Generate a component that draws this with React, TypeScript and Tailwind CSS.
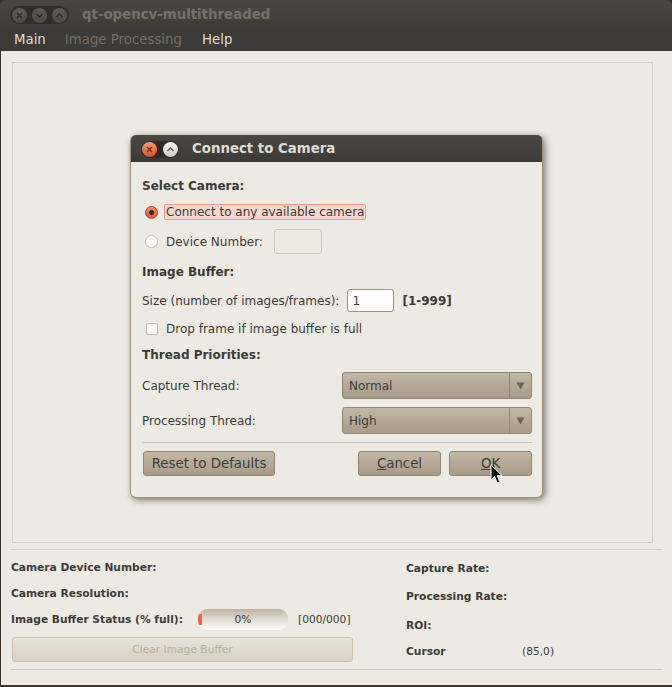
import React from "react";

const font = { fontFamily: '"DejaVu Sans", sans-serif' };

function WinBtn({ kind, active }: { kind: "x" | "down" | "up"; active?: boolean }) {
  const stroke = active ? (kind === "x" ? "#7a2a12" : "#555") : "#2c2a26";
  return (
    <span
      className={
        "flex h-[15px] w-[15px] items-center justify-center rounded-full " +
        (active
          ? kind === "x"
            ? "bg-gradient-to-b from-[#f59a78] to-[#d9502a]"
            : "bg-gradient-to-b from-[#fbfaf8] to-[#cfc9bf]"
          : "bg-gradient-to-b from-[#5f5b55] to-[#4f4b46]")
      }
    >
      <svg width="9" height="9" viewBox="0 0 9 9" fill="none" stroke={stroke} strokeWidth="1.4">
        {kind === "x" && <path d="M2 2l5 5M7 2l-5 5" />}
        {kind === "down" && <path d="M1.5 3l3 3 3-3" />}
        {kind === "up" && <path d="M1.5 6l3-3 3 3" />}
      </svg>
    </span>
  );
}

function Button({ children, className }: { children: React.ReactNode; className: string }) {
  return (
    <div
      className={
        "flex h-[25px] items-center justify-center rounded-[3px] border border-[#8f8571] bg-gradient-to-b from-[#c3b8a6] to-[#a89b87] text-[13.33px] text-[#3c3b37] " +
        className
      }
    >
      {children}
    </div>
  );
}

function Combo({ value }: { value: string }) {
  return (
    <div className="flex h-[27px] w-[190px] items-stretch rounded-[3px] border border-[#8f8571] bg-gradient-to-b from-[#c3b8a6] to-[#a89b87] text-[12px] text-[#3c3b37]">
      <div className="flex flex-1 items-center pl-[6px]">{value}</div>
      <div className="flex w-[22px] items-center justify-center border-l border-[#8f8571]">
        <svg width="9" height="8" viewBox="0 0 9 8">
          <path d="M0.5 0.5h8l-4 7z" fill="#67625a" />
        </svg>
      </div>
    </div>
  );
}

function Heading({ children, className = "" }: { children: React.ReactNode; className?: string }) {
  return <div className={"text-[12px] font-bold text-[#3c3b37] " + className}>{children}</div>;
}

function Dialog() {
  return (
    <div className="absolute left-[130px] top-[135px] flex h-[363px] w-[413px] flex-col rounded-[6px] border border-t-0 border-[#9a917f] bg-[#edeae3] shadow-[2px_2px_7px_rgba(60,55,45,0.65)]">
      <div className="flex h-[27px] shrink-0 items-center rounded-t-[5px] bg-gradient-to-b from-[#4a4843] to-[#3c3b37] pl-[10px] pt-[1px]">
        <div className="flex h-[17px] items-center gap-[6px] rounded-full bg-[#2c2b28] px-[1px]">
          <WinBtn kind="x" active />
          <WinBtn kind="up" active />
        </div>
        <div className="ml-[13px] text-[13.33px] font-bold text-[#dfdbd2]">Connect to Camera</div>
      </div>
      <div className="flex flex-1 flex-col pl-[11px] pr-[10px] pt-[15px]">
        <Heading>Select Camera:</Heading>
        <div className="mt-[9px] flex items-center">
          <span className="ml-[3px] flex h-[13px] w-[13px] items-center justify-center rounded-full border border-[#a8452c] bg-gradient-to-b from-[#f48a6a] to-[#e45a38]">
            <span className="h-[5px] w-[5px] rounded-full bg-[#2b2a27]" />
          </span>
          <span className="ml-[6px] flex h-[16px] items-center rounded-[2px] border border-[#ec9a84] bg-[#f5d8cd] px-[1px] text-[12px] text-[#3c3b37]">
            Connect to any available camera
          </span>
        </div>
        <div className="mt-[9px] flex items-center text-[12px] text-[#3c3b37]">
          <span className="ml-[3px] h-[13px] w-[13px] rounded-full border border-[#c4bcae] bg-white" />
          <span className="ml-[8px]">Device Number:</span>
          <span className="ml-[11px] h-[25px] w-[48px] rounded-[3px] border border-[#cfc6b5] bg-[#edeae3]" />
        </div>
        <Heading className="mt-[9px]">Image Buffer:</Heading>
        <div className="mt-[8px] flex items-center text-[12px] text-[#3c3b37]">
          <span>Size (number of images/frames):</span>
          <span className="ml-[8px] flex h-[23px] w-[47px] items-center rounded-[3px] border border-[#9c927f] bg-white pl-[4px]">1</span>
          <span className="ml-[8px] font-bold">[1-999]</span>
        </div>
        <div className="mt-[8px] flex items-center text-[12px] text-[#3c3b37]">
          <span className="ml-[4px] h-[12px] w-[12px] rounded-[2px] border border-[#c4bcae] bg-white" />
          <span className="ml-[8px]">Drop frame if image buffer is full</span>
        </div>
        <Heading className="mt-[8px]">Thread Priorities:</Heading>
        <div className="mt-[8px] flex items-center justify-between text-[12px] text-[#3c3b37]">
          <span>Capture Thread:</span>
          <Combo value="Normal" />
        </div>
        <div className="mt-[8px] flex items-center justify-between text-[12px] text-[#3c3b37]">
          <span>Processing Thread:</span>
          <Combo value="High" />
        </div>
        <div className="mt-[8px] h-[1px] shrink-0 bg-[#c9c4b9]" />
        <div className="mt-[8px] flex items-center">
          <Button className="ml-[1px] w-[132px]">Reset to Defaults</Button>
          <Button className="ml-auto w-[83px]">
            <span><span className="underline">C</span>ancel</span>
          </Button>
          <Button className="ml-[8px] w-[83px]">
            <span><span className="underline">O</span>K</span>
          </Button>
        </div>
      </div>
    </div>
  );
}

function Cursor() {
  return (
    <svg className="absolute left-[490px] top-[464px]" width="14" height="21" viewBox="0 0 14 21">
      <path d="M1 1v15l3.6-3.4 2.6 6.4 2.6-1.1-2.6-6.2h5z" fill="#111" stroke="#fff" strokeWidth="1" />
    </svg>
  );
}

export default function App() {
  return (
    <div className="relative h-[687px] w-[672px] overflow-hidden bg-[#3a3128]" style={font}>
      <div className="rounded-t-[6px] bg-[#3c3b37]">
        <div className="flex h-[30px] items-center rounded-t-[6px] bg-gradient-to-b from-[#4a4843] to-[#3c3b37] pl-[10px]">
          <div className="flex h-[18px] items-center gap-[5px] rounded-full bg-[#2f2e2a] px-[2px]">
            <WinBtn kind="x" />
            <WinBtn kind="down" />
            <WinBtn kind="up" />
          </div>
          <div className="ml-[13px] text-[13.33px] font-bold text-[#75716a]">qt-opencv-multithreaded</div>
        </div>
        <div className="flex h-[21px] items-center pb-[2px] pl-[14px] text-[13.33px]">
          <span className="text-[#dfdbd2]">Main</span>
          <span className="ml-[19px] text-[#75716a]">Image Processing</span>
          <span className="ml-[20px] text-[#dfdbd2]">Help</span>
        </div>
      </div>
      <div className="ml-[1px] flex h-[634px] flex-col bg-[#edeae3]">
        <div className="ml-[11px] mt-[11px] h-[481px] w-[641px] shrink-0 border border-[#d3cec2] bg-[#edeae3]" />
        <div className="ml-[10px] mt-[6px] h-[1px] w-[651px] shrink-0 bg-[#d5d0c5]" />
        <div className="flex flex-1 text-[10.67px] text-[#3c3b37]">
          <div className="ml-[10px] w-[395px]">
            <div className="mt-[10px] font-bold">Camera Device Number:</div>
            <div className="mt-[10px] font-bold">Camera Resolution:</div>
            <div className="mt-[7px] flex items-center">
              <span className="font-bold">Image Buffer Status (% full):</span>
              <div className="relative ml-[15px] flex h-[21px] w-[90px] items-center justify-center overflow-hidden rounded-[9px] bg-gradient-to-b from-[#bfb4a2] via-[#e0dbd0] to-[#ffffff]">
                <span className="absolute left-0 top-[5px] h-[11px] w-[4px] bg-[#f0644a]" />
                0%
              </div>
              <span className="ml-[10px]">[000/000]</span>
            </div>
            <div className="ml-[1px] mt-[7px] flex h-[25px] w-[341px] items-center justify-center rounded-[3px] border border-[#c9c0ae] bg-gradient-to-b from-[#e7e2d8] to-[#d8d1c4] text-[#b8ae9b]">
              Clear Image Buffer
            </div>
          </div>
          <div>
            <div className="mt-[11px] font-bold">Capture Rate:</div>
            <div className="mt-[12px] font-bold">Processing Rate:</div>
            <div className="mt-[13px] font-bold">ROI:</div>
            <div className="mt-[10px] flex">
              <span className="w-[116px] font-bold">Cursor</span>
              <span>(85,0)</span>
            </div>
          </div>
        </div>
        <div className="mb-[15px] ml-[10px] h-[1px] w-[651px] shrink-0 bg-[#cfcabe]" />
      </div>
      <Dialog />
      <Cursor />
    </div>
  );
}
